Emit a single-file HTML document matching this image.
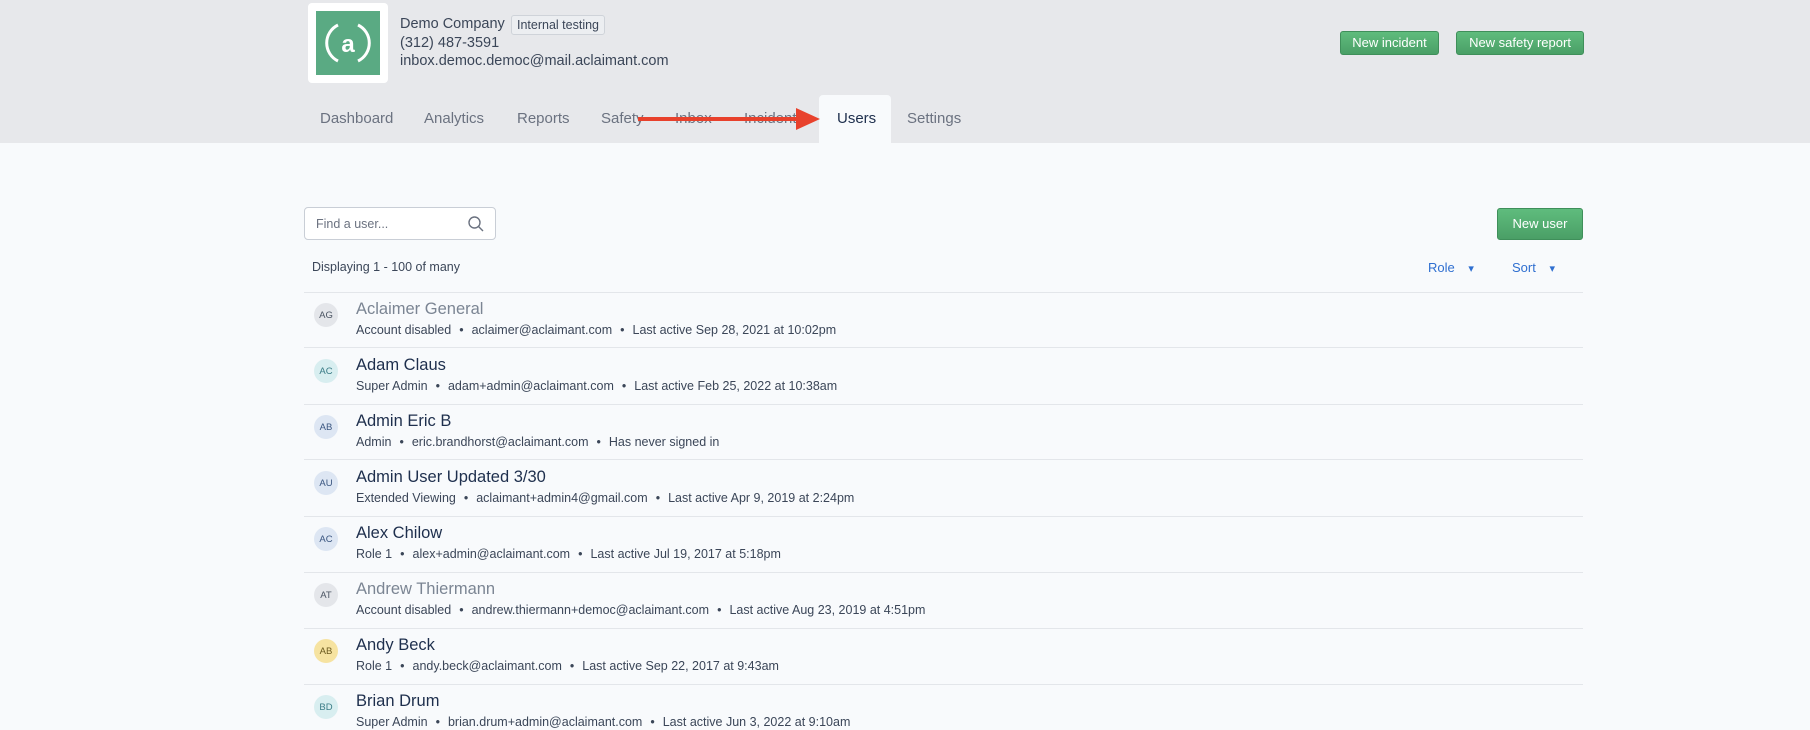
<!DOCTYPE html>
<html><head><meta charset="utf-8"><style>
*{margin:0;padding:0;box-sizing:border-box}
body{width:1810px;height:730px;overflow:hidden;background:#f8fafc;font-family:"Liberation Sans",Arial,sans-serif;color:#334155;position:relative}
.hdr{position:absolute;left:0;top:0;width:1810px;height:143px;background:#e7e8eb}
.abs{position:absolute;white-space:nowrap}
.logo{left:308px;top:3px;width:80px;height:80px;background:#fff;border-radius:4px}
.logo div{position:absolute;left:8px;top:8px;width:64px;height:64px;background:#5aaa83}
.co{left:400px;font-size:14.5px;color:#3b4658}
.badge{left:511px;top:15px;height:20px;padding:0 5px;border:1px solid #cfd3d9;border-radius:3px;background:#eceef1;font-size:12.5px;line-height:18px;color:#3b4658}
.btn{background:linear-gradient(#5fbc7d,#4a9f66);border:1px solid #3f8f5a;border-radius:3px;color:#fff;font-size:13px;text-align:center}
.tab{top:110px;font-size:15px;color:#6b7280}
.utab{left:819px;top:95px;width:72px;height:48px;background:#f8fafc;border-radius:4px 4px 0 0}
.search{left:304px;top:207px;width:192px;height:33px;border:1px solid #c9ced6;border-radius:4px;background:#fff;font-size:12.5px;color:#6b7280;padding:9px 11px}
.line{position:absolute;left:304px;width:1279px;height:1px;background:#e3e6ea}
.av{position:absolute;left:314px;width:24px;height:24px;border-radius:50%;font-size:9.5px;text-align:center;line-height:25px}
.nm{position:absolute;left:356px;font-size:16.5px;color:#1e2f4d}
.nm.dis{color:#7b8593}
.mt{position:absolute;left:356px;font-size:12.5px;color:#3b4658}
.mt b{font-weight:normal;margin:0 8px}
.blue{color:#2f6fd0;font-size:13px}
</style></head><body>
<div class="hdr"></div>
<div class="abs logo"><div></div>
<svg class="abs" style="left:8px;top:8px" width="64" height="64" viewBox="0 0 64 64"><path d="M22 14 A20 20 0 0 0 22 50" fill="none" stroke="#fff" stroke-width="3"/><path d="M42 14 A20 20 0 0 1 42 50" fill="none" stroke="#fff" stroke-width="3"/><text x="32" y="41" text-anchor="middle" font-family="Liberation Sans" font-size="24" font-weight="bold" fill="#fff">a</text></svg></div>
<div class="abs co" style="top:16px">Demo Company</div>
<div class="abs badge">Internal testing</div>
<div class="abs co" style="top:35px">(312) 487-3591</div>
<div class="abs co" style="top:53px">inbox.democ.democ@mail.aclaimant.com</div>
<div class="abs btn" style="left:1340px;top:31px;width:99px;height:24px;line-height:22px">New incident</div>
<div class="abs btn" style="left:1456px;top:31px;width:128px;height:24px;line-height:22px">New safety report</div>
<div class="abs utab"></div>
<div class="abs tab" style="left:320px">Dashboard</div>
<div class="abs tab" style="left:424px">Analytics</div>
<div class="abs tab" style="left:517px">Reports</div>
<div class="abs tab" style="left:601px">Safety</div>
<div class="abs tab" style="left:675px">Inbox</div>
<div class="abs tab" style="left:744px">Incidents</div>
<div class="abs tab" style="left:837px;color:#1e2f4d">Users</div>
<div class="abs tab" style="left:907px">Settings</div>
<svg class="abs" style="left:630px;top:104px" width="192" height="30"><line x1="8" y1="15" x2="170" y2="15" stroke="#e8412c" stroke-width="4"/><polygon points="166,4 190,15 166,26" fill="#e8412c"/></svg>
<div class="abs search">Find a user...</div>
<svg class="abs" style="left:467px;top:215px" width="18" height="18" viewBox="0 0 18 18"><circle cx="7.5" cy="7.5" r="5.5" fill="none" stroke="#6b7280" stroke-width="1.4"/><line x1="11.5" y1="11.5" x2="16" y2="16" stroke="#6b7280" stroke-width="1.4"/></svg>
<div class="abs btn" style="left:1497px;top:208px;width:86px;height:32px;line-height:30px">New user</div>
<div class="abs" style="left:312px;top:260px;font-size:12.5px;color:#3b4658">Displaying 1 - 100 of many</div>
<div class="abs blue" style="left:1428px;top:260px">Role <span style="font-size:11px;margin-left:10px">▾</span></div>
<div class="abs blue" style="left:1512px;top:260px">Sort <span style="font-size:11px;margin-left:10px">▾</span></div>

<div class="line" style="top:292px"></div>
<div class="av" style="top:303px;background:#e4e6ea;color:#4b5563">AG</div>
<div class="nm dis" style="top:300px">Aclaimer General</div>
<div class="mt" style="top:323px">Account disabled<b>•</b>aclaimer@aclaimant.com<b>•</b>Last active Sep 28, 2021 at 10:02pm</div>

<div class="line" style="top:347px"></div>
<div class="av" style="top:359px;background:#d8eef0;color:#3a7c86">AC</div>
<div class="nm" style="top:356px">Adam Claus</div>
<div class="mt" style="top:379px">Super Admin<b>•</b>adam+admin@aclaimant.com<b>•</b>Last active Feb 25, 2022 at 10:38am</div>

<div class="line" style="top:404px"></div>
<div class="av" style="top:415px;background:#dde6f3;color:#3a5680">AB</div>
<div class="nm" style="top:412px">Admin Eric B</div>
<div class="mt" style="top:435px">Admin<b>•</b>eric.brandhorst@aclaimant.com<b>•</b>Has never signed in</div>

<div class="line" style="top:459px"></div>
<div class="av" style="top:471px;background:#dde6f3;color:#3a5680">AU</div>
<div class="nm" style="top:468px">Admin User Updated 3/30</div>
<div class="mt" style="top:491px">Extended Viewing<b>•</b>aclaimant+admin4@gmail.com<b>•</b>Last active Apr 9, 2019 at 2:24pm</div>

<div class="line" style="top:516px"></div>
<div class="av" style="top:527px;background:#dde6f3;color:#3a5680">AC</div>
<div class="nm" style="top:524px">Alex Chilow</div>
<div class="mt" style="top:547px">Role 1<b>•</b>alex+admin@aclaimant.com<b>•</b>Last active Jul 19, 2017 at 5:18pm</div>

<div class="line" style="top:572px"></div>
<div class="av" style="top:583px;background:#e4e6ea;color:#4b5563">AT</div>
<div class="nm dis" style="top:580px">Andrew Thiermann</div>
<div class="mt" style="top:603px">Account disabled<b>•</b>andrew.thiermann+democ@aclaimant.com<b>•</b>Last active Aug 23, 2019 at 4:51pm</div>

<div class="line" style="top:628px"></div>
<div class="av" style="top:639px;background:#f6e3a1;color:#6b5a1e">AB</div>
<div class="nm" style="top:636px">Andy Beck</div>
<div class="mt" style="top:659px">Role 1<b>•</b>andy.beck@aclaimant.com<b>•</b>Last active Sep 22, 2017 at 9:43am</div>

<div class="line" style="top:684px"></div>
<div class="av" style="top:695px;background:#d8eef0;color:#3a7c86">BD</div>
<div class="nm" style="top:692px">Brian Drum</div>
<div class="mt" style="top:715px">Super Admin<b>•</b>brian.drum+admin@aclaimant.com<b>•</b>Last active Jun 3, 2022 at 9:10am</div>
</body></html>
